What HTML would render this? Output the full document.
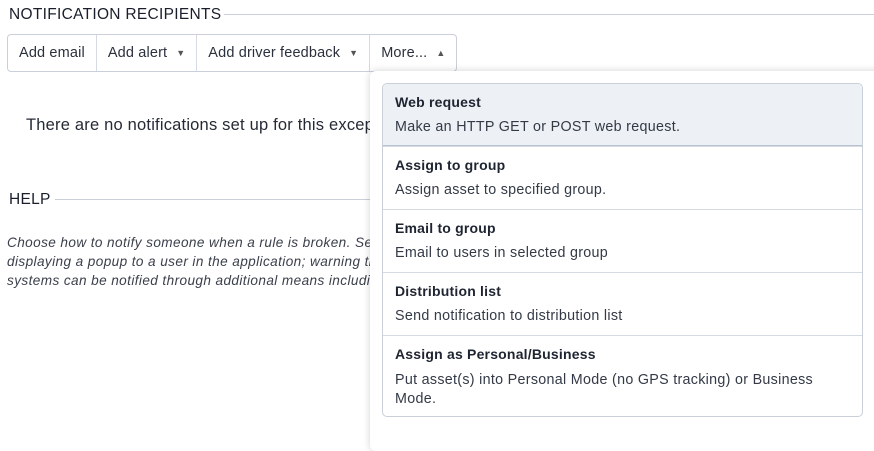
<!DOCTYPE html>
<html><head><style>
body{margin:0;width:874px;height:427px;overflow:hidden;background:#fff;font-family:"Liberation Sans",sans-serif;color:#1f2430;position:relative}
.a{position:absolute;white-space:nowrap}
.h{font-size:15.5px;color:#1a1f2b;letter-spacing:0.3px}
.line{position:absolute;height:1px;background:#c9d0da}
.tb{position:absolute;left:7px;top:34px;height:36px;border:1px solid #c9d0da;border-radius:4px;display:flex;font-size:14.5px;color:#2a303c;letter-spacing:0.15px}
.tb div{padding:0 11px;line-height:36px;border-right:1px solid #d6dbe3}
.tb div:last-child{border-right:none}
.car{font-size:9px;color:#555;margin-left:9px;vertical-align:1px}
.panel{position:absolute;left:370px;top:71px;width:520px;height:380px;background:#fff;border-radius:6px;box-shadow:0 0 8px rgba(0,0,0,.18)}
.list{position:absolute;left:382px;top:83px;width:479px;border:1px solid #c9d0da;border-radius:5px;overflow:hidden}
.it{border-top:1px solid #d6dbe3;padding:10px 12px 0;height:52px;font-size:14.3px;letter-spacing:0.3px}
.it:first-child{border-top:none;background:#edf0f5;border-bottom:1px solid #b8c2d0;height:51px}
.it b{display:block;font-size:14px;color:#1e2430;margin-bottom:9px;letter-spacing:0.2px}
.it span{color:#333a46}
.help{font-style:italic;font-size:13.6px;color:#3a3f4a;line-height:19px;letter-spacing:0.4px}
</style></head><body>
<div class="a h" style="left:9px;top:6px">NOTIFICATION RECIPIENTS</div>
<div class="line" style="left:224px;top:14px;width:650px"></div>
<div class="tb"><div>Add email</div><div>Add alert<span class="car">▼</span></div><div>Add driver feedback<span class="car">▼</span></div><div>More...<span class="car">▲</span></div></div>
<div class="a" style="left:26px;top:116px;font-size:16.5px;color:#252a35;letter-spacing:0.2px">There are no notifications set up for this exception</div>
<div class="a h" style="left:9px;top:191px">HELP</div>
<div class="line" style="left:55px;top:199px;width:330px"></div>
<div class="a help" style="left:7px;top:233px">Choose how to notify someone when a rule is broken. Send an email or by<br>displaying a popup to a user in the application; warning the driver with a beep<br>systems can be notified through additional means including web requests</div>
<div class="panel"></div>
<div class="list">
<div class="it"><b>Web request</b><span>Make an HTTP GET or POST web request.</span></div>
<div class="it"><b>Assign to group</b><span>Assign asset to specified group.</span></div>
<div class="it"><b>Email to group</b><span>Email to users in selected group</span></div>
<div class="it"><b>Distribution list</b><span>Send notification to distribution list</span></div>
<div class="it" style="height:70px;line-height:19px"><b style="line-height:normal">Assign as Personal/Business</b><span>Put asset(s) into Personal Mode (no GPS tracking) or Business<br>Mode.</span></div>
</div>
</body></html>
